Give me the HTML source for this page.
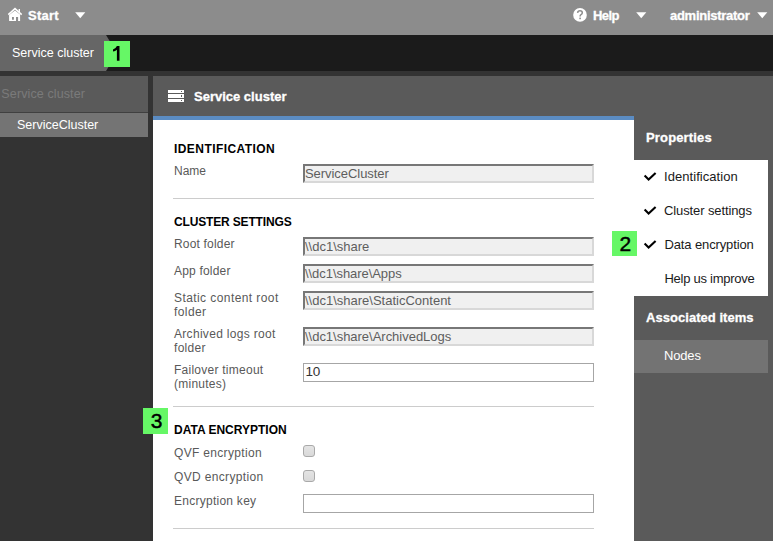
<!DOCTYPE html>
<html><head><meta charset="utf-8"><style>
*{margin:0;padding:0;box-sizing:border-box}
html,body{width:773px;height:541px;overflow:hidden;background:#333;font-family:"Liberation Sans",sans-serif}
.a{position:absolute;white-space:nowrap;line-height:1}
.blk{position:absolute}
.inp{position:absolute;left:303px;width:291px;height:19px;background:#f0f0f0;border:2px solid;border-color:#777 #d8d8d8 #d8d8d8 #777}
.inp2{position:absolute;left:303px;width:291px;height:19px;background:#fff;border:1px solid #a6a6a6}
.sep{position:absolute;left:173px;width:421px;height:1px;background:#cccccc}
.g{position:absolute;background:#66f766}
.cb{position:absolute;left:303px;width:12px;height:12px;border:1px solid #a9a9a9;border-radius:3px;background:linear-gradient(#e4e4e4,#d9d9d9)}
</style></head><body>

<div class="blk" style="left:0;top:0;width:773px;height:35px;background:#8c8c8c"></div>
<div class="blk" style="left:0;top:35px;width:773px;height:36px;background:#1b1b1b"></div>
<div class="blk" style="left:0;top:35px;width:130px;height:36px;background:#666;clip-path:polygon(0 0,106px 0,117px 18px,106px 36px,0 36px)"></div>
<div class="blk" style="left:0;top:76px;width:148px;height:36px;background:#5a5a5a"></div>
<div class="blk" style="left:0;top:112px;width:148px;height:1px;background:#404040"></div>
<div class="blk" style="left:0;top:113px;width:148px;height:24px;background:#747474"></div>
<div class="blk" style="left:153px;top:76px;width:620px;height:465px;background:#5a5a5a"></div>
<div class="blk" style="left:153px;top:116px;width:481px;height:4px;background:#5b8cc3"></div>
<div class="blk" style="left:153px;top:120px;width:481px;height:421px;background:#fff"></div>
<div class="blk" style="left:634px;top:160px;width:134px;height:136px;background:#fff"></div>
<div class="blk" style="left:634px;top:340px;width:134px;height:33px;background:#737373"></div>
<div class="inp" style="top:164px"></div>
<div class="inp" style="top:237px"></div>
<div class="inp" style="top:264px"></div>
<div class="inp" style="top:291px"></div>
<div class="inp" style="top:327px"></div>
<div class="inp2" style="top:363px"></div>
<div class="inp2" style="top:494px"></div>
<div class="sep" style="top:198px"></div>
<div class="sep" style="top:406px"></div>
<div class="sep" style="top:528px"></div>
<div class="cb" style="top:445px"></div>
<div class="cb" style="top:470px"></div>
<div class="g" style="left:104px;top:41px;width:26px;height:26px"></div>
<div class="g" style="left:143px;top:408px;width:25px;height:26px"></div>
<div class="g" style="left:612px;top:231px;width:25px;height:25px"></div>
<svg class="a" style="left:100px;top:40px" width="30" height="30" viewBox="0 0 30 30"><path d="M16.9 6 L19.5 6 L19.5 20.8 L16.9 20.8 L16.9 9.8 Q15.2 11.2 13 11.6 L13 9.6 Q15.6 8.8 16.9 6 Z" fill="#000"/></svg>
<svg class="a" style="left:0;top:0" width="30" height="30" viewBox="0 0 30 30">
<path d="M8.3 14.6 L15 8.6 L21.7 14.6" stroke="#fff" stroke-width="1.5" fill="none"/>
<rect x="18.6" y="9" width="1.4" height="3.2" fill="#fff"/>
<path d="M9.1 20.9 L9.1 15 L15 10.4 L20.1 14.6 L20.1 20.9 L18.1 20.9 L18.1 17 L16 17 L16 20.9 Z M12 17 L12 19.8 L13.9 19.8 L13.9 17 Z" fill="#fff" fill-rule="evenodd"/>
</svg>
<svg class="a" style="left:75px;top:12px" width="11" height="7" viewBox="0 0 11 7"><path d="M0.2 0.3 L10.3 0.3 L5.25 6.3 Z" fill="#fff"/></svg>
<svg class="a" style="left:636px;top:12px" width="11" height="7" viewBox="0 0 11 7"><path d="M0.2 0.3 L10.3 0.3 L5.25 6.3 Z" fill="#fff"/></svg>
<svg class="a" style="left:757px;top:12px" width="11" height="7" viewBox="0 0 11 7"><path d="M0.2 0.3 L10.3 0.3 L5.25 6.3 Z" fill="#fff"/></svg>
<svg class="a" style="left:566px;top:2px" width="28" height="26" viewBox="0 0 28 26">
<circle cx="14" cy="12.9" r="6.8" fill="#fff"/>
<path d="M11.6 10.9 Q11.8 8.8 14 8.8 Q16.3 8.8 16.3 10.8 Q16.3 12 15 12.7 Q14.1 13.2 14.1 14.6" stroke="#8c8c8c" stroke-width="1.5" fill="none"/>
<rect x="13.3" y="15.6" width="1.6" height="1.6" fill="#8c8c8c"/>
</svg>
<svg class="a" style="left:168px;top:90px" width="16" height="12" viewBox="0 0 16 12">
<rect x="0" y="0" width="16" height="3" fill="#fff"/><rect x="0" y="4" width="16" height="4" fill="#fff"/><rect x="0" y="9" width="16" height="3" fill="#fff"/>
<rect x="13" y="1" width="1" height="1" fill="#5a5a5a"/><rect x="13" y="5" width="1" height="2" fill="#5a5a5a"/><rect x="13" y="10" width="1" height="1" fill="#5a5a5a"/>
</svg>
<svg class="a" style="left:643px;top:172px" width="14" height="10" viewBox="0 0 14 10"><path d="M1.6 3.6 L5.6 7.5 L12.6 0.9" stroke="#000" stroke-width="2.1" fill="none"/></svg>
<svg class="a" style="left:643px;top:206px" width="14" height="10" viewBox="0 0 14 10"><path d="M1.6 3.6 L5.6 7.5 L12.6 0.9" stroke="#000" stroke-width="2.1" fill="none"/></svg>
<svg class="a" style="left:643px;top:240px" width="14" height="10" viewBox="0 0 14 10"><path d="M1.6 3.6 L5.6 7.5 L12.6 0.9" stroke="#000" stroke-width="2.1" fill="none"/></svg>
<div class="a" id="start" style="left:28px;top:8.7px;font-size:13px;color:#fff;letter-spacing:0.244px;font-weight:bold;-webkit-text-stroke:0.3px #fff">Start</div>
<div class="a" id="help" style="left:593px;top:8.7px;font-size:13px;color:#fff;letter-spacing:-0.56px;font-weight:bold;-webkit-text-stroke:0.3px #fff">Help</div>
<div class="a" id="admin" style="left:670px;top:8.7px;font-size:13px;color:#fff;letter-spacing:-0.28px;font-weight:bold;-webkit-text-stroke:0.3px #fff">administrator</div>
<div class="a" id="crumb" style="left:12px;top:46.56px;font-size:12.5px;color:#fff;letter-spacing:0px">Service cluster</div>
<div class="a" id="lefthead" style="left:1.37px;top:88px;font-size:12.5px;color:#7a7a7a;letter-spacing:0.115px">Service cluster</div>
<div class="a" id="leftitem" style="left:17px;top:119px;font-size:12.5px;color:#fff;letter-spacing:0px">ServiceCluster</div>
<div class="a" id="mainhead" style="left:194px;top:89.7px;font-size:13px;color:#fff;letter-spacing:0px;font-weight:bold;-webkit-text-stroke:0.3px #fff">Service cluster</div>
<div class="a" id="ident" style="left:174px;top:143px;font-size:12px;color:#000;letter-spacing:0.431px;font-weight:bold">IDENTIFICATION</div>
<div class="a" id="name" style="left:174px;top:165px;font-size:12px;color:#595959;letter-spacing:0px">Name</div>
<div class="a" id="inp1v" style="left:305px;top:167px;font-size:13px;color:#5e5e5e;letter-spacing:-0.054px">ServiceCluster</div>
<div class="a" id="cluster" style="left:174px;top:216px;font-size:12px;color:#000;letter-spacing:-0.158px;font-weight:bold">CLUSTER SETTINGS</div>
<div class="a" id="root" style="left:174px;top:238px;font-size:12px;color:#595959;letter-spacing:0.182px">Root folder</div>
<div class="a" id="rootv" style="left:305px;top:240px;font-size:13px;color:#5e5e5e;letter-spacing:0px">\\dc1\share</div>
<div class="a" id="app" style="left:174px;top:265px;font-size:12px;color:#595959;letter-spacing:0.187px">App folder</div>
<div class="a" id="appv" style="left:305px;top:267px;font-size:13px;color:#5e5e5e;letter-spacing:-0.056px">\\dc1\share\Apps</div>
<div class="a" id="static" style="left:174px;top:291.16px;font-size:12px;color:#595959;letter-spacing:0.419px;line-height:14px">Static content root<br>folder</div>
<div class="a" id="staticv" style="left:305px;top:294px;font-size:13px;color:#5e5e5e;letter-spacing:0px">\\dc1\share\StaticContent</div>
<div class="a" id="arch" style="left:174px;top:327.02px;font-size:12px;color:#595959;letter-spacing:0.305px;line-height:14px">Archived logs root<br>folder</div>
<div class="a" id="archv" style="left:305px;top:330px;font-size:13px;color:#5e5e5e;letter-spacing:-0.021px">\\dc1\share\ArchivedLogs</div>
<div class="a" id="fail" style="left:174px;top:363.23px;font-size:12px;color:#595959;letter-spacing:0.252px;line-height:14px">Failover timeout<br>(minutes)</div>
<div class="a" id="failv" style="left:305.5px;top:365px;font-size:13.5px;color:#333;letter-spacing:-0.3px">10</div>
<div class="a" id="dataenc" style="left:174px;top:424px;font-size:12px;color:#000;letter-spacing:0px;font-weight:bold">DATA ENCRYPTION</div>
<div class="a" id="qvf" style="left:174px;top:446.84px;font-size:12px;color:#595959;letter-spacing:0.323px">QVF encryption</div>
<div class="a" id="qvd" style="left:174px;top:471px;font-size:12px;color:#595959;letter-spacing:0.339px">QVD encryption</div>
<div class="a" id="enckey" style="left:174px;top:495px;font-size:12px;color:#595959;letter-spacing:0.258px">Encryption key</div>
<div class="a" id="props" style="left:646px;top:130.93px;font-size:13px;color:#fff;letter-spacing:0.156px;font-weight:bold;-webkit-text-stroke:0.3px #fff">Properties</div>
<div class="a" id="identr" style="left:664px;top:170.37px;font-size:13px;color:#1a1a1a;letter-spacing:0.054px">Identification</div>
<div class="a" id="clusterr" style="left:664px;top:204.09px;font-size:13px;color:#1a1a1a;letter-spacing:-0.112px">Cluster settings</div>
<div class="a" id="dataencr" style="left:664.49px;top:238.44px;font-size:13px;color:#1a1a1a;letter-spacing:-0.125px">Data encryption</div>
<div class="a" id="helpus" style="left:664.49px;top:272.16px;font-size:13px;color:#1a1a1a;letter-spacing:-0.26px">Help us improve</div>
<div class="a" id="assoc" style="left:646px;top:310.58px;font-size:13px;color:#fff;letter-spacing:0.042px;font-weight:bold;-webkit-text-stroke:0.3px #fff">Associated items</div>
<div class="a" id="nodes" style="left:664px;top:349.23px;font-size:13px;color:#fff;letter-spacing:-0.175px">Nodes</div>
<div class="a" id="g2" style="left:619.42px;top:233.02px;font-size:21px;color:#000;letter-spacing:0px;-webkit-text-stroke:0.45px #000">2</div>
<div class="a" id="g3" style="left:150.63px;top:410.02px;font-size:21px;color:#000;letter-spacing:0px;-webkit-text-stroke:0.45px #000">3</div>
</body></html>
